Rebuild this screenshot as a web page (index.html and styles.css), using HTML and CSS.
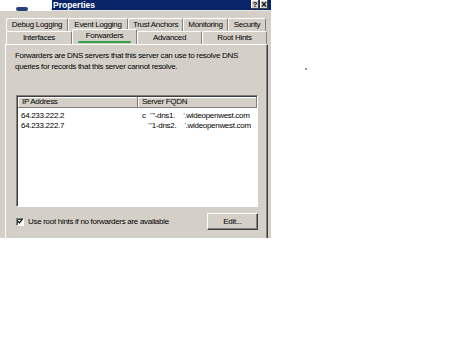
FILE: index.html
```html
<!DOCTYPE html>
<html>
<head>
<meta charset="utf-8">
<link rel="stylesheet" href="styles.css">
</head>
<body>
<div class="dialog">
  <div class="titlebar">
    <div class="mask"><span class="blot"></span></div>
    <div class="title">Properties</div>
    <div class="tbtn">?</div>
    <div class="tbtn x">×</div>
  </div>
  <div class="tabs">
    <div class="tabrow back">
      <div class="tab w62">Debug Logging</div>
      <div class="tab w60">Event Logging</div>
      <div class="tab w55">Trust Anchors</div>
      <div class="tab w45">Monitoring</div>
      <div class="tab w38">Security</div>
    </div>
    <div class="tabrow front">
      <div class="tab w66">Interfaces</div>
      <div class="tab w65 selected"><span>Forwarders</span><span class="focus"></span></div>
      <div class="tab w65">Advanced</div>
      <div class="tab w65">Root Hints</div>
    </div>
  </div>
  <div class="panel">
    <p class="desc">Forwarders are DNS servers that this server can use to resolve DNS<br>queries for records that this server cannot resolve.</p>
    <div class="list">
      <div class="lhead">
        <div class="hcell c1">IP Address</div>
        <div class="hcell c2">Server FQDN</div>
      </div>
      <div class="lrow">
        <div class="cell c1">64.233.222.2</div>
        <div class="cell c2"><span>c</span><span class="gap1"></span><span class="faint">"'</span>'-dns1.<span class="gap2"></span><span class="faint">'</span>.wideopenwest.com</div>
      </div>
      <div class="lrow">
        <div class="cell c1">64.233.222.7</div>
        <div class="cell c2"><span class="gap3"></span><span class="faint">"'</span>1-dns2.<span class="gap2"></span><span class="faint">'</span>.wideopenwest.com</div>
      </div>
    </div>
    <div class="bottom">
      <label class="check">
        <span class="box"><svg width="7" height="7" viewBox="0 0 7 7"><path d="M1 3 L3 5 L6 1" fill="none" stroke="#000" stroke-width="1.4"/></svg></span>
        <span>Use root hints if no forwarders are available</span>
      </label>
      <div class="button">Edit...</div>
    </div>
  </div>
</div>
<span class="speck"></span>
</body>
</html>
```

FILE: styles.css
```css
html, body {
  margin: 0;
  padding: 0;
  background: #ffffff;
}
body {
  font-family: "Liberation Sans", Arial, sans-serif;
  font-size: 8px;
  letter-spacing: -0.3px;
  color: #000;
  width: 474px;
  height: 355px;
  position: relative;
}
.dialog {
  width: 271px;
  height: 238px;
  background: #d4d0c8;
  display: flex;
  flex-direction: column;
}
.titlebar {
  height: 10px;
  background: #0a246a;
  display: flex;
  align-items: flex-start;
  border-bottom: 1px solid #e8e6e0;
}
.mask {
  width: 52px;
  height: 11px;
  background: #fff;
  border-bottom-right-radius: 3px;
  position: relative;
  flex: none;
}
.blot {
  position: absolute;
  left: 16px;
  top: 7px;
  width: 12px;
  height: 4px;
  background: #27407a;
  border-radius: 3px;
}
.title {
  flex: 1;
  color: #fff;
  font-weight: bold;
  font-size: 8.5px;
  letter-spacing: 0;
  line-height: 10px;
  padding-left: 1px;
}
.tbtn {
  width: 8px;
  height: 9px;
  margin-left: 1px;
  background: #d4d0c8;
  font-weight: bold;
  font-size: 8px;
  letter-spacing: 0;
  line-height: 9px;
  text-align: center;
  box-shadow: inset -1px -1px #404040, inset 1px 1px #fff;
}
.tbtn.x {
  margin-right: 3px;
  font-size: 10px;
}
.tabs {
  margin-top: 7px;
  padding-left: 6px;
}
.tabrow {
  display: flex;
  height: 13px;
}
.tab {
  box-sizing: border-box;
  height: 13px;
  line-height: 12px;
  text-align: center;
  white-space: nowrap;
  border-top: 1px solid #fff;
  border-left: 1px solid #fff;
  border-right: 1px solid #808080;
  border-top-left-radius: 2px;
  border-top-right-radius: 2px;
}
.w62 { width: 62px; }
.w60 { width: 60px; }
.w55 { width: 55px; }
.w45 { width: 45px; }
.w38 { width: 38px; }
.w66 { width: 66px; }
.w65 { width: 65px; }
.tab.selected {
  height: 15px;
  margin-top: -2px;
  position: relative;
  background: #d4d0c8;
  z-index: 1;
  line-height: 12px;
}
.focus {
  position: absolute;
  left: 5px;
  right: 5px;
  top: 11px;
  height: 2px;
  background: #34a04c;
  border-radius: 1px;
}
.panel {
  flex: 1;
  margin-left: 5px;
  margin-right: 3px;
  border-top: 1px solid #fff;
  border-left: 1px solid #fff;
  border-right: 1px solid #404040;
  box-shadow: inset -1px 0 #808080;
  padding: 0 9px 0 9px;
}
.desc {
  margin: 5px 0 0 0;
  line-height: 11px;
}
.list {
  margin-top: 23px;
  margin-left: 1px;
  width: 242px;
  height: 112px;
  box-sizing: border-box;
  background: #fff;
  border-top: 1px solid #808080;
  border-left: 1px solid #808080;
  border-right: 1px solid #fff;
  border-bottom: 1px solid #fff;
  box-shadow: inset 1px 1px #404040;
  padding: 1px 0 0 1px;
}
.lhead {
  display: flex;
  height: 11px;
}
.hcell {
  box-sizing: border-box;
  height: 11px;
  line-height: 10px;
  background: #d4d0c8;
  padding-left: 4px;
  box-shadow: inset -1px -1px #808080, inset 1px 1px #fff;
}
.hcell.c1 { width: 120px; }
.hcell.c2 { width: 119px; }
.lrow {
  display: flex;
  height: 10px;
  line-height: 10px;
}
.lhead + .lrow { margin-top: 3px; }
.cell { white-space: nowrap; }
.cell.c1 { width: 120px; padding-left: 3px; box-sizing: border-box; }
.cell.c2 { padding-left: 4px; }
.faint { color: #666; }
.gap1 { display: inline-block; width: 4px; }
.gap2 { display: inline-block; width: 8px; }
.gap3 { display: inline-block; width: 6px; }
.bottom {
  margin-top: 6px;
  display: flex;
  align-items: center;
  height: 17px;
}
.check {
  display: flex;
  align-items: center;
  flex: 1;
  margin-left: 1px;
}
.box {
  width: 8px;
  height: 8px;
  box-sizing: border-box;
  background: #fff;
  border-top: 1px solid #808080;
  border-left: 1px solid #808080;
  border-right: 1px solid #fff;
  border-bottom: 1px solid #fff;
  box-shadow: inset 1px 1px #404040;
  margin-right: 4px;
  display: flex;
  align-items: center;
  justify-content: center;
}
.box svg { display: block; }
.button {
  width: 51px;
  height: 17px;
  box-sizing: border-box;
  line-height: 16px;
  text-align: center;
  background: #d4d0c8;
  border-top: 1px solid #fff;
  border-left: 1px solid #fff;
  border-right: 1px solid #404040;
  border-bottom: 1px solid #404040;
  box-shadow: inset -1px -1px #808080;
  margin-right: 0;
}
.speck {
  position: absolute;
  left: 305px;
  top: 68px;
  width: 2px;
  height: 2px;
  background: #9a9a9a;
}
```
